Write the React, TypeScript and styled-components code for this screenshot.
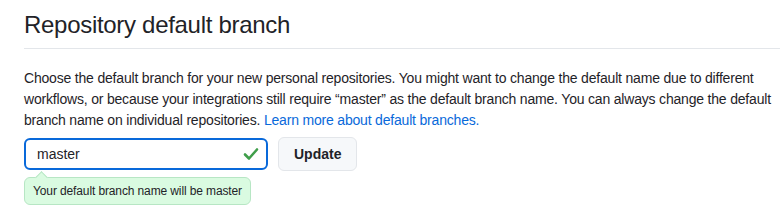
import React from 'react';
import styled, { createGlobalStyle } from 'styled-components';

const GlobalStyle = createGlobalStyle`
  body {
    margin: 0;
    background: #ffffff;
    font-family: "Segoe UI", "Liberation Sans", Arial, sans-serif;
    color: #1f2328;
  }
`;

const Page = styled.section`
  padding: 0 0 0 24px;
  width: 780px;
  box-sizing: border-box;
`;

const Heading = styled.h2`
  margin: 0;
  padding: 10px 0 8px;
  font-size: 24px;
  font-weight: 400;
  letter-spacing: -0.3px;
  line-height: 30px;
  border-bottom: 1px solid #e3e6ea;
`;

const Text = styled.p`
  margin: 19px 0 0;
  font-size: 14px;
  line-height: 21px;
  letter-spacing: -0.19px;
  white-space: nowrap;
`;

const Link = styled.a`
  color: #0969da;
  text-decoration: none;
`;

const Row = styled.div`
  display: flex;
  align-items: center;
  gap: 10px;
  margin-top: 6px;
`;

const Field = styled.div`
  position: relative;
  width: 244px;
`;

const Input = styled.input`
  width: 100%;
  box-sizing: border-box;
  height: 32px;
  padding: 0 30px 0 11px;
  font-family: inherit;
  font-size: 14px;
  color: #1f2328;
  border: 2px solid #0969da;
  border-radius: 6px;
  outline: none;
`;

const Check = styled.svg`
  position: absolute;
  right: 9px;
  top: 9px;
`;

const Button = styled.button`
  height: 34px;
  padding: 0 15px;
  font-family: inherit;
  font-size: 14px;
  font-weight: 600;
  color: #1f2328;
  background: #f6f8fa;
  border: 1px solid #e3e6ea;
  border-radius: 6px;
`;

const Note = styled.div`
  position: relative;
  display: inline-block;
  margin-top: 6px;
  padding: 4px 8px;
  font-size: 12px;
  line-height: 18px;
  letter-spacing: -0.12px;
  color: #1f2328;
  background: #dafbe1;
  border: 1px solid #b7e6c4;
  border-radius: 6px;

  &::before {
    content: '';
    position: absolute;
    left: 12px;
    top: -5px;
    width: 8px;
    height: 8px;
    background: #dafbe1;
    border-left: 1px solid #b7e6c4;
    border-top: 1px solid #b7e6c4;
    transform: rotate(45deg);
  }
`;

export default function App() {
  return (
    <Page>
      <GlobalStyle />
      <Heading>Repository default branch</Heading>
      <Text>
        Choose the default branch for your new personal repositories. You might want to change the default name due to different
        <br />
        workflows, or because your integrations still require “master” as the default branch name. You can always change the default
        <br />
        branch name on individual repositories. <Link href="#">Learn more about default branches.</Link>
      </Text>
      <Row>
        <Field>
          <Input defaultValue="master" />
          <Check width="16" height="14" viewBox="0 0 16 14" fill="none" stroke="#3f9e4a" strokeWidth="2.6" strokeLinecap="round" strokeLinejoin="round">
            <polyline points="2,7.5 6,11.5 14,2.5" />
          </Check>
        </Field>
        <Button>Update</Button>
      </Row>
      <Note>Your default branch name will be master</Note>
    </Page>
  );
}
